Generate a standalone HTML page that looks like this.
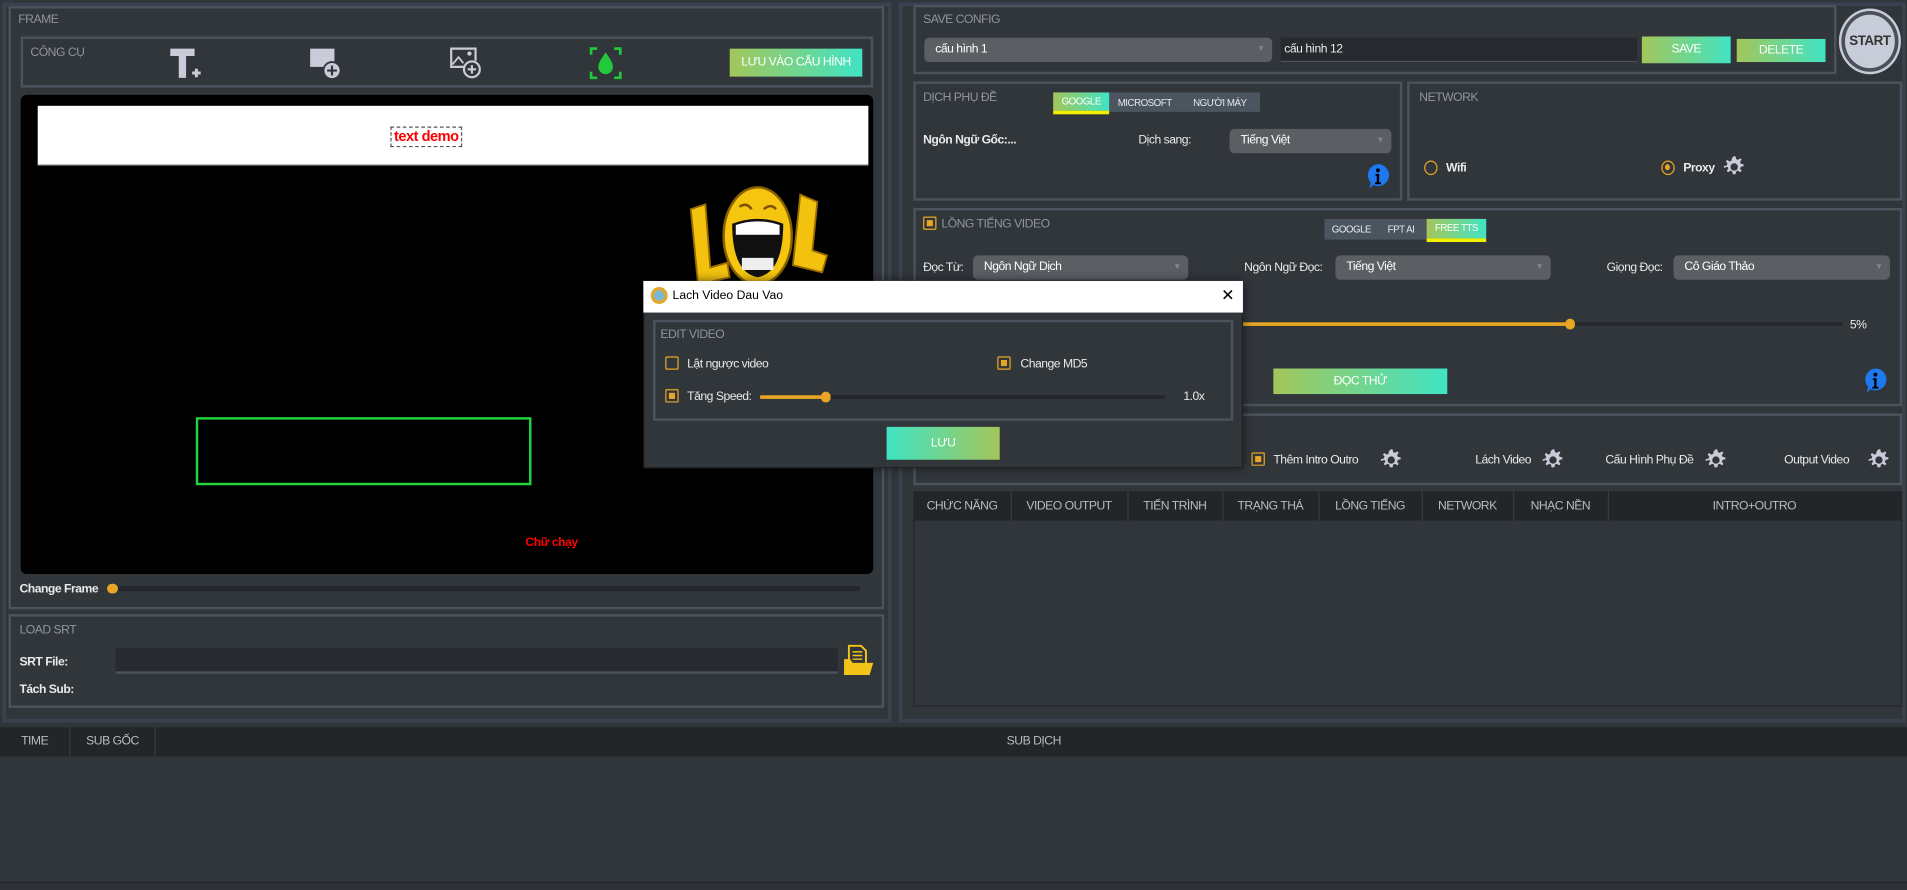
<!DOCTYPE html>
<html><head><meta charset="utf-8"><style>
*{box-sizing:border-box;margin:0;padding:0}
html,body{width:1907px;height:890px;overflow:hidden;background:#31363b}
#s{position:absolute;left:0;top:0;width:1568px;height:732px;transform:scale(1.21620);transform-origin:0 0;background:#31363b;font-family:"Liberation Sans Narrow","Liberation Sans","Noto Sans CJK SC",sans-serif;font-size:10px;letter-spacing:-0.4px;color:#e8eaec;font-weight:bold}
.a{position:absolute}
.box{position:absolute;border:2px solid #4b535c}
.outer{position:absolute;border:3px solid #3a4250}
.lbl{position:absolute;color:#8f959b;font-size:10px;font-weight:normal}
.t{position:absolute;white-space:nowrap}
.grad{background:linear-gradient(90deg,#a3c65a,#40e4c4);color:#fff;text-align:center;font-weight:normal}
.gradr{background:linear-gradient(90deg,#40e4c4,#a3c65a);color:#fff;text-align:center;font-weight:normal}
.combo{position:absolute;background:#5b5f64;border-radius:4px;color:#fff;font-weight:normal;padding-left:9px}
.combo:after{content:"▼";position:absolute;right:6px;top:0;font-size:7px;color:#80848a}
.cb{position:absolute;width:11px;height:11px;border:1.5px solid #e8a624;border-radius:1px}
.cb.on:after{content:"";position:absolute;left:1.5px;top:1.5px;width:5px;height:5px;background:#e8a624}
.th{position:absolute;color:#b8bcc0;font-weight:normal;text-align:center;white-space:nowrap}
.gear{position:absolute;width:18px;height:18px}
</style></head><body><div id="s">
<div class="outer" style="left:2px;top:2px;width:731px;height:592px"></div>
<div class="outer" style="left:739px;top:2px;width:828px;height:592px"></div>

<div class="box" style="left:7px;top:5px;width:720px;height:496px"></div>
<div class="lbl" style="left:15px;top:11px">FRAME</div>
<div class="box" style="left:17px;top:30px;width:701px;height:42px"></div>
<div class="lbl" style="left:25px;top:38px">CÔNG CỤ</div>
<svg class="a" style="left:139px;top:38px" width="28" height="28" viewBox="0 0 28 28"><path d="M1 2h20v6h-7v18h-6v-18h-7z" fill="#c9ccd8"/><path d="M19 22h7M22.5 18.5v7" stroke="#c9ccd8" stroke-width="2.5"/></svg>
<svg class="a" style="left:254px;top:38px" width="28" height="28" viewBox="0 0 28 28"><rect x="1" y="2" width="20" height="15" fill="#c9ccd8"/><circle cx="19" cy="20" r="7" fill="#c9ccd8" stroke="#31363b" stroke-width="1.5"/><path d="M15 20h8M19 16v8" stroke="#31363b" stroke-width="1.8"/></svg>
<svg class="a" style="left:369px;top:38px" width="28" height="28" viewBox="0 0 28 28"><path d="M14 17H2V2h20v10" fill="none" stroke="#c9ccd8" stroke-width="1.8"/><path d="M3 15l5-6 4 5" fill="none" stroke="#c9ccd8" stroke-width="1.5"/><circle cx="17" cy="6" r="1.8" fill="#c9ccd8"/><circle cx="19" cy="19" r="6.5" fill="#31363b" stroke="#c9ccd8" stroke-width="1.8"/><path d="M15.5 19h7M19 15.5v7" stroke="#c9ccd8" stroke-width="1.8"/></svg>
<svg class="a" style="left:484px;top:38px" width="28" height="28" viewBox="0 0 28 28"><path d="M2 7V2h5M21 2h5v5M26 21v5h-5M7 26H2v-5" fill="none" stroke="#22c93a" stroke-width="2.2"/><path d="M14 5c-4 6-6 9-6 12a6 6 0 0 0 12 0c0-3-2-6-6-12z" fill="#22c93a"/></svg>
<div class="a grad" style="left:600px;top:40px;width:109px;height:23px;line-height:23px">LƯU VÀO CẤU HÌNH</div>

<div class="a" style="left:17px;top:78px;width:701px;height:394px;background:#000;border-radius:5px"></div>
<div class="a" style="left:31px;top:87px;width:683px;height:49px;background:#fff;border-bottom:1px solid #aaa"></div>
<div class="t" style="left:321px;top:104px;border:1px dashed #555;color:#f00;font-size:12px;padding:0 2px;line-height:15px">text demo</div>
<svg class="a" style="left:560px;top:150px" width="125" height="85" viewBox="0 0 125 85">
<path d="M8 22l12-4 4 52 14-4 2 12-26 6z" fill="#f3c20f" stroke="#9a6d00" stroke-width="1.5"/>
<path d="M98 10l14 6-4 40 12 4-4 14-24-6z" fill="#f3c20f" stroke="#9a6d00" stroke-width="1.5"/>
<ellipse cx="63" cy="44" rx="28" ry="40" fill="#f5c510" stroke="#8a6200" stroke-width="2"/>
<path d="M42 34q21-8 42 0q0 40-21 44q-21-4-21-44z" fill="#111"/>
<path d="M45 35q18-6 36 0v8H45z" fill="#fff"/><path d="M50 62h26v10H50z" fill="#eee"/>
<path d="M48 20q6-4 10 2M68 22q6-5 10 0" stroke="#7a5200" stroke-width="2" fill="none"/></svg>
<div class="a" style="left:161px;top:343px;width:276px;height:56px;border:2px solid #1fd43c"></div>
<div class="t" style="left:432px;top:441px;color:#f00">Chữ chạy</div>
<div class="t" style="left:16px;top:479px">Change Frame</div>
<div class="a" style="left:88px;top:482px;width:619px;height:4px;background:#24272b"></div>
<div class="a" style="left:88px;top:480px;width:9px;height:8px;border-radius:4px;background:#e8a624"></div>

<div class="box" style="left:7px;top:505px;width:720px;height:77px"></div>
<div class="lbl" style="left:16px;top:513px">LOAD SRT</div>
<div class="t" style="left:16px;top:539px">SRT File:</div>
<div class="a" style="left:95px;top:533px;width:594px;height:21px;background:#272a2f;border-bottom:2px solid #4b535c"></div>
<svg class="a" style="left:692px;top:529px" width="28" height="28" viewBox="0 0 28 28"><path d="M6 2h10l4 4v12H6z" fill="#31363b" stroke="#f2c418" stroke-width="1.6"/><path d="M9 7h8M9 10h8M9 13h8" stroke="#f2c418" stroke-width="1.2"/><path d="M2 13h5l2 3h17l-3 10H2z" fill="#f2c418"/></svg>
<div class="t" style="left:16px;top:562px">Tách Sub:</div>

<div class="a" style="left:0;top:598px;width:1568px;height:24px;background:#222629"></div>
<div class="th" style="left:0;top:604px;width:57px">TIME</div>
<div class="a" style="left:57px;top:598px;width:1px;height:24px;background:#363b40"></div>
<div class="th" style="left:58px;top:604px;width:69px">SUB GỐC</div>
<div class="a" style="left:127px;top:598px;width:1px;height:24px;background:#363b40"></div>
<div class="th" style="left:800px;top:604px;width:100px">SUB DỊCH</div>
<div class="a" style="left:0;top:725px;width:1568px;height:1px;background:#22262a"></div>
<div class="a" style="left:0;top:726px;width:1568px;height:6px;background:#2e3237"></div>

<div class="box" style="left:751px;top:4px;width:759px;height:57px"></div>
<div class="lbl" style="left:759px;top:11px">SAVE CONFIG</div>
<div class="combo" style="left:760px;top:31px;width:286px;height:20px;line-height:20px">cấu hình 1</div>
<div class="a" style="left:1053px;top:31px;width:293px;height:20px;background:#26292e;border-bottom:1px solid #4b535c;font-weight:normal;padding-left:3px;line-height:19px">cấu hình 12</div>
<div class="a grad" style="left:1350px;top:30px;width:73px;height:22px;line-height:22px">SAVE</div>
<div class="a grad" style="left:1428px;top:32px;width:73px;height:19px;line-height:19px">DELETE</div>
<div class="a" style="left:1514px;top:9px;width:47px;height:50px;border-radius:50%;background:#c8ccd8;border:3px solid #4a4f58;box-shadow:0 0 0 2px #c8ccd8;color:#333;font-size:11px;text-align:center;line-height:44px">START</div>

<div class="box" style="left:751px;top:67px;width:402px;height:98px"></div>
<div class="lbl" style="left:759px;top:75px">DỊCH PHỤ ĐỀ</div>
<div class="a" style="left:866px;top:76px;width:170px;height:16px;background:#4a5560"></div>
<div class="a grad" style="left:866px;top:76px;width:46px;height:18px;line-height:15px;font-size:8px;border-bottom:3px solid #f0f000">GOOGLE</div>
<div class="t" style="left:919px;top:80px;font-size:8px;font-weight:normal">MICROSOFT</div>
<div class="t" style="left:981px;top:80px;font-size:8px;font-weight:normal">NGƯỜI MÁY</div>
<div class="t" style="left:759px;top:110px">Ngôn Ngữ Gốc:...</div>
<div class="t" style="left:936px;top:110px;font-weight:normal">Dịch sang:</div>
<div class="combo" style="left:1011px;top:106px;width:133px;height:20px;line-height:20px">Tiếng Việt</div>
<svg class="a" style="left:1123px;top:134px" width="20" height="22" viewBox="0 0 20 22"><path d="M10 1a9 9 0 1 1-4 17l-3 3 1-5A9 9 0 0 1 10 1z" fill="#1e78f0"/><circle cx="10" cy="6" r="1.6" fill="#000"/><path d="M8 9h3v7h1.5v1.5h-5V16H9v-5.5H8z" fill="#000"/></svg>

<div class="box" style="left:1157px;top:67px;width:407px;height:98px"></div>
<div class="lbl" style="left:1167px;top:75px">NETWORK</div>
<div class="a" style="left:1171px;top:132px;width:11px;height:12px;border:1.5px solid #e8a624;border-radius:50%"></div>
<div class="t" style="left:1189px;top:133px">Wifi</div>
<div class="a" style="left:1366px;top:132px;width:11px;height:12px;border:1.5px solid #e8a624;border-radius:50%"><div class="a" style="left:2px;top:2px;width:4px;height:5px;border-radius:50%;background:#e8a624"></div></div>
<div class="t" style="left:1384px;top:133px">Proxy</div>

<div class="box" style="left:751px;top:171px;width:813px;height:163px"></div>
<div class="cb on" style="left:759px;top:178px"></div>
<div class="lbl" style="left:774px;top:179px">LỒNG TIẾNG VIDEO</div>
<div class="a" style="left:1089px;top:180px;width:133px;height:17px;background:#4a5560"></div>
<div class="t" style="left:1095px;top:184px;font-size:8px;font-weight:normal">GOOGLE</div>
<div class="t" style="left:1141px;top:184px;font-size:8px;font-weight:normal">FPT AI</div>
<div class="a grad" style="left:1173px;top:180px;width:49px;height:19px;line-height:16px;font-size:8px;border-bottom:3px solid #f0f000">FREE TTS</div>
<div class="t" style="left:759px;top:215px;font-weight:normal">Đọc Từ:</div>
<div class="combo" style="left:800px;top:210px;width:177px;height:20px;line-height:20px">Ngôn Ngữ Dịch</div>
<div class="t" style="left:1023px;top:215px;font-weight:normal">Ngôn Ngữ Đọc:</div>
<div class="combo" style="left:1098px;top:210px;width:177px;height:20px;line-height:20px">Tiếng Việt</div>
<div class="t" style="left:1321px;top:215px;font-weight:normal">Giọng Đọc:</div>
<div class="combo" style="left:1376px;top:210px;width:178px;height:20px;line-height:20px">Cô Giáo Thảo</div>
<div class="a" style="left:1000px;top:265px;width:515px;height:3px;background:#24272b"></div>
<div class="a" style="left:1000px;top:265px;width:291px;height:3px;background:#e8a624"></div>
<div class="a" style="left:1287px;top:262px;width:8px;height:9px;border-radius:4px;background:#e8a624"></div>
<div class="t" style="left:1521px;top:262px;font-weight:normal">5%</div>
<div class="a grad" style="left:1047px;top:303px;width:143px;height:21px;line-height:21px">ĐỌC THỬ</div>
<svg class="a" style="left:1532px;top:302px" width="20" height="22" viewBox="0 0 20 22"><path d="M10 1a9 9 0 1 1-4 17l-3 3 1-5A9 9 0 0 1 10 1z" fill="#1e78f0"/><circle cx="10" cy="6" r="1.6" fill="#000"/><path d="M8 9h3v7h1.5v1.5h-5V16H9v-5.5H8z" fill="#000"/></svg>

<div class="box" style="left:751px;top:340px;width:813px;height:59px"></div>
<div class="cb on" style="left:1029px;top:372px"></div>
<div class="t" style="left:1047px;top:373px;font-weight:normal">Thêm Intro Outro</div>
<div class="t" style="left:1213px;top:373px;font-weight:normal">Lách Video</div>
<div class="t" style="left:1320px;top:373px;font-weight:normal">Cấu Hình Phụ Đề</div>
<div class="t" style="left:1467px;top:373px;font-weight:normal">Output Video</div>

<div class="a" style="left:751px;top:404px;width:813px;height:177px;background:#31363b;border:1px solid #24272b"></div>
<div class="a" style="left:751px;top:404px;width:813px;height:24px;background:#222629"></div>
<div class="th" style="left:751px;top:411px;width:80px">CHỨC NĂNG</div>
<div class="th" style="left:831px;top:411px;width:96px">VIDEO OUTPUT</div>
<div class="th" style="left:927px;top:411px;width:78px">TIẾN TRÌNH</div>
<div class="th" style="left:1005px;top:411px;width:79px">TRẠNG THÁ</div>
<div class="th" style="left:1084px;top:411px;width:85px">LỒNG TIẾNG</div>
<div class="th" style="left:1169px;top:411px;width:75px">NETWORK</div>
<div class="th" style="left:1244px;top:411px;width:78px">NHẠC NỀN</div>
<div class="th" style="left:1322px;top:411px;width:241px">INTRO+OUTRO</div>
<div class="a" style="left:831px;top:404px;width:1px;height:24px;background:#363b40"></div>
<div class="a" style="left:927px;top:404px;width:1px;height:24px;background:#363b40"></div>
<div class="a" style="left:1005px;top:404px;width:1px;height:24px;background:#363b40"></div>
<div class="a" style="left:1084px;top:404px;width:1px;height:24px;background:#363b40"></div>
<div class="a" style="left:1169px;top:404px;width:1px;height:24px;background:#363b40"></div>
<div class="a" style="left:1244px;top:404px;width:1px;height:24px;background:#363b40"></div>
<div class="a" style="left:1322px;top:404px;width:1px;height:24px;background:#363b40"></div>

<svg width="0" height="0" style="position:absolute"><defs><g id="g"><path d="M9 0.5l1.6 0 .5 2.4 1.6.7 2-1.4 1.2 1.2-1.4 2 .7 1.6 2.4.5v1.6l-2.4.5-.7 1.6 1.4 2-1.2 1.2-2-1.4-1.6.7-.5 2.4H8.2l-.5-2.4-1.6-.7-2 1.4-1.2-1.2 1.4-2-.7-1.6L.5 10.6V9l2.4-.5.7-1.6-1.4-2 1.2-1.2 2 1.4 1.6-.7.5-2.4z" fill="#c9ccd8"/><circle cx="9.4" cy="9.8" r="3.2" fill="#31363b"/></g></defs></svg>
<svg class="gear" style="left:1417px;top:128px" viewBox="0 0 19 19"><use href="#g"/></svg>
<svg class="gear" style="left:1135px;top:369px" viewBox="0 0 19 19"><use href="#g"/></svg>
<svg class="gear" style="left:1268px;top:369px" viewBox="0 0 19 19"><use href="#g"/></svg>
<svg class="gear" style="left:1402px;top:369px" viewBox="0 0 19 19"><use href="#g"/></svg>
<svg class="gear" style="left:1536px;top:369px" viewBox="0 0 19 19"><use href="#g"/></svg>

<div class="a" style="left:529px;top:231px;width:493px;height:154px;background:#31363b;box-shadow:0 0 8px rgba(0,0,0,.6);border:1px solid #222"></div>
<div class="a" style="left:529px;top:231px;width:493px;height:26px;background:#fff"></div>
<div class="a" style="left:535px;top:236px;width:14px;height:14px;border-radius:50%;background:radial-gradient(#7ab8d8 40%,#e0a830 45%)"></div>
<div class="t" style="left:553px;top:238px;color:#000;font-weight:normal;font-size:10px;letter-spacing:0">Lach Video Dau Vao</div>
<div class="t" style="left:1004px;top:235px;color:#000;font-weight:normal;font-size:13px">✕</div>
<div class="box" style="left:537px;top:263px;width:477px;height:83px"></div>
<div class="lbl" style="left:543px;top:270px">EDIT VIDEO</div>
<div class="cb" style="left:547px;top:293px"></div>
<div class="t" style="left:565px;top:294px;font-weight:normal">Lật ngược video</div>
<div class="cb on" style="left:820px;top:293px"></div>
<div class="t" style="left:839px;top:294px;font-weight:normal">Change MD5</div>
<div class="cb on" style="left:547px;top:320px"></div>
<div class="t" style="left:565px;top:321px;font-weight:normal">Tăng Speed:</div>
<div class="a" style="left:625px;top:325px;width:333px;height:3px;background:#24272b"></div>
<div class="a" style="left:625px;top:325px;width:54px;height:3px;background:#e8a624"></div>
<div class="a" style="left:675px;top:322px;width:8px;height:9px;border-radius:4px;background:#e8a624"></div>
<div class="t" style="left:973px;top:321px;font-weight:normal">1.0x</div>
<div class="a gradr" style="left:729px;top:351px;width:93px;height:27px;line-height:27px">LƯU</div>
</div></body></html>
